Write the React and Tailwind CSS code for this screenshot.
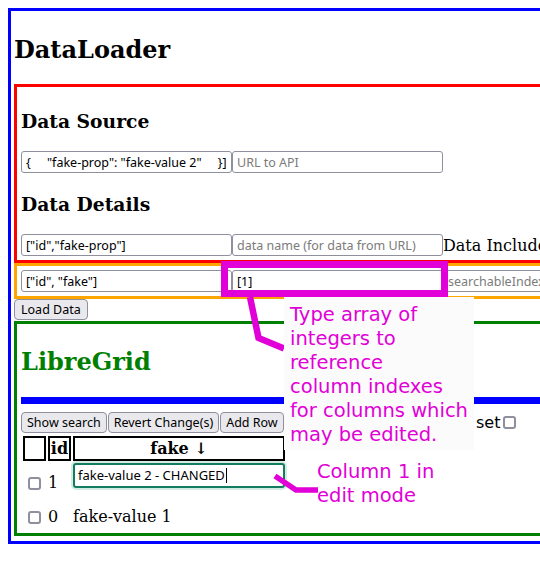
const Field = ({ value, placeholder, className = "" }) => (
  <div
    className={`flex h-[22px] w-[211px] shrink-0 items-center overflow-hidden whitespace-pre rounded-[3px] border border-[#8f8f9d] bg-white px-[4px] font-['Noto_Sans',sans-serif] text-[12.5px] ${className}`}
  >
    {value ? (
      <span className="text-black">{value}</span>
    ) : (
      <span className="text-[#7b7b7b]">{placeholder}</span>
    )}
  </div>
);

const Btn = ({ children, className = "" }) => (
  <button
    className={`flex h-[21px] shrink-0 items-center whitespace-nowrap rounded-[4px] border border-[#8f8f9d] bg-[#e9e9ed] font-['Noto_Sans',sans-serif] text-[12.5px] text-black ${className}`}
  >
    {children}
  </button>
);

const Box = ({ className = "" }) => (
  <span className={`block h-[13px] w-[13px] shrink-0 rounded-[3px] border-2 border-[#8f8f9d] bg-white ${className}`} />
);

const App = () => {
  return (
    <div className="relative h-[566px] w-[540px] overflow-hidden bg-white font-['DejaVu_Serif',serif] text-[16px] leading-[19px] text-black">
      <div className="pl-2 pt-2">
        <section className="w-[720px] border-[3px] border-[#0000ff] px-[3px] pb-[5px]">
          <h1 className="mb-[20px] mt-[25px] text-[24px] font-bold leading-[28px]">DataLoader</h1>

          {/* data source + details */}
          <div className="border-[3px] border-[#ff0000] px-[4px] pb-[4px] pt-[23px]">
            <h3 className="text-[18.72px] font-bold leading-[22px]">Data Source</h3>
            <div className="mt-[19px] flex">
              <Field value={'{     "fake-prop": "fake-value 2"     }]'} />
              <Field placeholder="URL to API" />
            </div>
            <h3 className="mt-[20px] text-[18.72px] font-bold leading-[22px]">Data Details</h3>
            <div className="mt-[19px] flex items-center">
              <Field value={'["id","fake-prop"]'} />
              <Field placeholder="data name (for data from URL)" />
              <span className="whitespace-nowrap">Data Included</span>
            </div>
          </div>

          <div className="flex border-[3px] border-[#ffa500] p-[4px]">
            <Field value={'["id", "fake"]'} />
            <Field value="[1]" />
            <Field placeholder="searchableIndexes" />
          </div>

          <Btn className="px-[6px]">Load Data</Btn>

          {/* grid */}
          <div className="mt-px border-[3px] border-[#008000] px-[4px] pb-[4px] pt-[24px]">
            <h2 className="text-[24px] font-bold leading-[28px] text-[#008000]">LibreGrid</h2>
            <div className="mt-[21px] h-[7px] bg-[#0000ff]" />

            <div className="mt-[8px] flex h-[21px] items-center">
              <div className="flex w-[455px] gap-[1px]">
                <Btn className="px-[5px]">Show search</Btn>
                <Btn className="px-[5px]">Revert Change(s)</Btn>
                <Btn className="px-[5px]">Add Row</Btn>
              </div>
              <span className="font-['DejaVu_Sans',sans-serif]">set</span>
              <Box className="ml-[3px]" />
            </div>

            <div className="ml-[2px] mt-[3px] flex gap-[2px]">
              <div className="h-[25px] w-[23px] border-2 border-black" />
              <div className="flex h-[25px] w-[23px] items-center justify-center border-2 border-black font-bold">id</div>
              <div className="flex h-[25px] w-[212px] items-center justify-center border-2 border-black font-bold">fake ↓</div>
            </div>

            <div className="ml-[2px] mt-[2px] flex h-[27px] items-start gap-[2px]">
              <div className="w-[23px] pl-[5px] pt-[14px]">
                <Box />
              </div>
              <div className="w-[23px] pt-[10px]">1</div>
              <div className="flex h-[25px] w-[212px] items-center whitespace-nowrap rounded-[3px] border-2 border-[#137b5f] px-[3px] font-['Noto_Sans',sans-serif] text-[13px] ring-2 ring-[#d3ebe0]">
                fake-value 2 - CHANGED
                <span className="ml-px h-[15px] w-px bg-black" />
              </div>
            </div>

            <div className="mb-[3px] ml-[2px] mt-[2px] flex items-start gap-[2px]">
              <div className="w-[23px] pl-[5px] pt-[19px]">
                <Box />
              </div>
              <div className="w-[23px] pt-[15px]">0</div>
              <div className="w-[212px] whitespace-nowrap pt-[15px]">fake-value 1</div>
            </div>
          </div>
        </section>
      </div>

      {/* annotations drawn over the page */}
      <div className="absolute left-[221px] top-[261px] h-[36px] w-[227px] border-[7px] border-[#e100d7]" />
      <svg className="pointer-events-none absolute left-0 top-0" width="540" height="566">
        <polyline points="250,297 258.5,338 284,348.5" fill="none" stroke="#e100d7" strokeWidth="6.5" />
        <polyline points="275,476 296,490 318,490" fill="none" stroke="#e100d7" strokeWidth="5.5" />
      </svg>
      <div className="absolute left-[284px] top-[297px] h-[153px] w-[190px] whitespace-nowrap bg-[#fbfbfb] pl-[6px] pt-[6px] font-['DejaVu_Sans',sans-serif] text-[19.5px] leading-[24px] text-[#e100d7]">
        Type array of
        <br />
        integers to
        <br />
        reference
        <br />
        column indexes
        <br />
        for columns which
        <br />
        may be edited.
      </div>
      <div className="absolute left-[317px] top-[460px] whitespace-nowrap font-['DejaVu_Sans',sans-serif] text-[19.5px] leading-[23.5px] text-[#e100d7]">
        Column 1 in
        <br />
        edit mode
      </div>
    </div>
  );
};

export default App;
